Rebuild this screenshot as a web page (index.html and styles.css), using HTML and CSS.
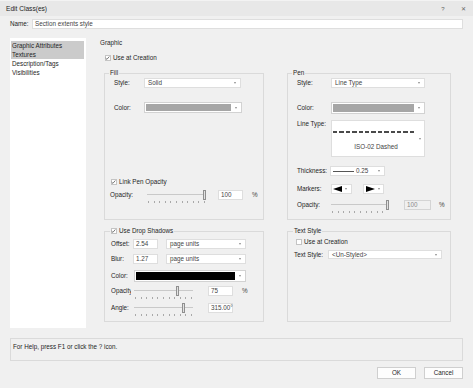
FILE: index.html
```html
<!DOCTYPE html>
<html lang="en">
<head>
    <meta charset="UTF-8">
    <title>Edit Class(es)</title>
    <link rel="stylesheet" href="styles.css">
</head>
<body>
<div class="dialog">
    <div class="titlebar">
        <span class="title">Edit Class(es)</span>
        <span class="tb-btn">?</span>
        <span class="tb-btn">&#x2715;</span>
    </div>

    <div class="content">
        <div class="name-row">
            <span class="name-label">Name:</span>
            <div class="field name-field">Section extents style</div>
        </div>

        <div class="main">
            <ul class="nav">
                <li class="sel">Graphic Attributes</li>
                <li class="sel">Textures</li>
                <li>Description/Tags</li>
                <li>Visibilities</li>
            </ul>

            <div class="panel">
                <div class="panel-title">Graphic</div>
                <div class="check top-check"><span class="cb on"><svg viewBox="0 0 6 6"><path d="M0.8 3.2 2.3 4.6 5.2 1.2"/></svg></span>Use at Creation</div>

                <div class="groups">
                    <!-- Fill -->
                    <div class="group">
                        <span class="legend">Fill</span>
                        <div class="row fill-style">
                            <span class="lbl" style="width:30px">Style:</span>
                            <div class="select" style="width:97px"><span>Solid</span><i class="arr"></i></div>
                        </div>
                        <div class="row fill-color">
                            <span class="lbl" style="width:30px">Color:</span>
                            <div class="swatch-box" style="width:98px"><span class="swatch gray"></span><i class="arr"></i></div>
                        </div>
                        <div class="check link-check"><span class="cb on"><svg viewBox="0 0 6 6"><path d="M0.8 3.2 2.3 4.6 5.2 1.2"/></svg></span>Link Pen Opacity</div>
                        <div class="row fill-opacity">
                            <span class="lbl" style="width:37px">Opacity:</span>
                            <div class="slider" style="width:59px"><span class="thumb" style="left:56px"></span></div>
                            <div class="field num" style="width:25px;margin-left:12px">100</div>
                            <span class="pct" style="margin-left:9px">%</span>
                        </div>
                    </div>

                    <!-- Pen -->
                    <div class="group">
                        <span class="legend">Pen</span>
                        <div class="row pen-style">
                            <span class="lbl" style="width:34px">Style:</span>
                            <div class="select" style="width:94px"><span>Line Type</span><i class="arr"></i></div>
                        </div>
                        <div class="row pen-color">
                            <span class="lbl" style="width:34px">Color:</span>
                            <div class="swatch-box" style="width:94px"><span class="swatch gray"></span><i class="arr"></i></div>
                        </div>
                        <div class="row pen-linetype">
                            <span class="lbl" style="width:34px">Line Type:</span>
                            <div class="linetype">
                                <div class="lt-main">
                                    <div class="dashes"></div>
                                    <div class="lt-name">ISO-02 Dashed</div>
                                </div>
                                <i class="arr"></i>
                            </div>
                        </div>
                        <div class="row pen-thick">
                            <span class="lbl" style="width:33px">Thickness:</span>
                            <div class="thick"><span class="thick-line"></span><span>0.25</span><i class="arr"></i></div>
                        </div>
                        <div class="row pen-markers">
                            <span class="lbl" style="width:34px">Markers:</span>
                            <div class="marker"><span class="tri-left"></span><i class="arr"></i></div>
                            <div class="marker" style="margin-left:11px"><span class="tri-right"></span><i class="arr"></i></div>
                        </div>
                        <div class="row pen-opacity">
                            <span class="lbl" style="width:34px">Opacity:</span>
                            <div class="slider" style="width:58px"><span class="thumb" style="left:55px"></span></div>
                            <div class="field num disabled" style="width:27px;margin-left:15px">100</div>
                            <span class="pct" style="margin-left:8px">%</span>
                        </div>
                    </div>

                    <!-- Drop shadows -->
                    <div class="group">
                        <span class="legend shadow-legend"><span class="cb on"><svg viewBox="0 0 6 6"><path d="M0.8 3.2 2.3 4.6 5.2 1.2"/></svg></span>Use Drop Shadows</span>
                        <div class="row sh-offset">
                            <span class="lbl" style="width:22px">Offset:</span>
                            <div class="field" style="width:25px">2.54</div>
                            <div class="select" style="width:80px;margin-left:8px"><span>page units</span><i class="arr"></i></div>
                        </div>
                        <div class="row sh-blur">
                            <span class="lbl" style="width:22px">Blur:</span>
                            <div class="field" style="width:25px">1.27</div>
                            <div class="select" style="width:80px;margin-left:8px"><span>page units</span><i class="arr"></i></div>
                        </div>
                        <div class="row sh-color">
                            <span class="lbl" style="width:23px">Color:</span>
                            <div class="swatch-box" style="width:112px"><span class="swatch black"></span><i class="arr"></i></div>
                        </div>
                        <div class="row sh-opacity">
                            <span class="lbl clip">Opacity:</span>
                            <div class="slider" style="width:59px"><span class="thumb" style="left:42px"></span></div>
                            <div class="field num" style="width:25px;margin-left:15px">75</div>
                            <span class="pct" style="margin-left:9px">%</span>
                        </div>
                        <div class="row sh-angle">
                            <span class="lbl" style="width:23px">Angle:</span>
                            <div class="slider" style="width:59px"><span class="thumb" style="left:48px"></span></div>
                            <div class="field num" style="width:25px;margin-left:15px">315.00&deg;</div>
                        </div>
                    </div>

                    <!-- Text style -->
                    <div class="group">
                        <span class="legend text-legend">Text Style</span>
                        <div class="check ts-check"><span class="cb"></span>Use at Creation</div>
                        <div class="row ts-style">
                            <span class="lbl" style="width:34px">Text Style:</span>
                            <div class="select" style="width:114px;height:9px"><span>&lt;Un-Styled&gt;</span><i class="arr"></i></div>
                        </div>
                    </div>
                </div>
            </div>
        </div>

        <div class="help">For Help, press F1 or click the ? icon.</div>

        <div class="buttons">
            <div class="btn">OK</div>
            <div class="btn">Cancel</div>
        </div>
    </div>
</div>
</body>
</html>
```
FILE: styles.css
```css
* {
    box-sizing: border-box;
}
body {
    margin: 0;
    background: #fff;
    font-family: "Liberation Sans", Arial, sans-serif;
    font-size: 6.3px;
    line-height: 8px;
    color: #1e1e1e;
}
.dialog {
    width: 473px;
    height: 388px;
    background: #f0f0f0;
}
.titlebar {
    height: 16px;
    background: #e8e8e8;
    border-top: 1px solid #f3f3f3;
    display: flex;
    align-items: center;
    padding-left: 6px;
    font-size: 6.6px;
}
.title {
    flex: 1;
}
.tb-btn {
    width: 20px;
    text-align: center;
    color: #666;
    font-size: 6px;
}
.content {
    padding: 0 10px;
}
.name-row {
    display: flex;
    align-items: center;
    height: 10px;
    margin-top: 3px;
}
.name-label {
    width: 22px;
}
.name-field {
    flex: 1;
    color: #555;
}
.field {
    height: 10px;
    background: #fff;
    border: 1px solid #dedede;
    padding: 0 2px;
    line-height: 8px;
    color: #444;
    white-space: nowrap;
}
.field.disabled {
    background: #f0f0f0;
    border-color: #d4d4d4;
    color: #8a8a8a;
}
.main {
    display: flex;
    height: 290px;
    margin-top: 9px;
}
.nav {
    list-style: none;
    margin: 0;
    width: 76px;
    background: #fff;
    padding: 3px 2px 0 1px;
}
.nav li {
    height: 9px;
    line-height: 9px;
    padding-left: 1px;
}
.nav li.sel {
    background: #cbcbcb;
}
.panel {
    margin-left: 14px;
    flex: 1;
}
.panel-title {
    margin-top: 1px;
}
.check {
    display: flex;
    align-items: center;
    height: 9px;
}
.top-check {
    margin-top: 6px;
    padding-left: 5px;
}
.cb {
    width: 6px;
    height: 6px;
    border: 1px solid #c4c4c4;
    background: #fff;
    margin-right: 2px;
    display: inline-flex;
}
.cb svg {
    width: 6px;
    height: 6px;
    margin: -1px 0 0 -1px;
    fill: none;
    stroke: #333;
    stroke-width: 0.8;
}
.groups {
    display: grid;
    grid-template-columns: 160px 164px;
    grid-template-rows: 147px 91px;
    column-gap: 23px;
    row-gap: 11px;
    margin: 11px 0 0 4px;
}
.group {
    position: relative;
    border: 1px solid #dadada;
}
.legend {
    position: absolute;
    top: -5px;
    left: 4px;
    padding: 0 1px;
    background: #f0f0f0;
    display: flex;
    align-items: center;
}
.shadow-legend {
    left: 5px;
}
.text-legend {
    left: 5px;
}
.row {
    display: flex;
    align-items: center;
    height: 10px;
}
.lbl {
    flex: none;
    white-space: nowrap;
}
.lbl.clip {
    width: 20px;
    margin-right: 3px;
    overflow: hidden;
}
.select {
    display: flex;
    align-items: center;
    justify-content: space-between;
    height: 10px;
    background: #fff;
    border: 1px solid #dedede;
    padding: 0 4px 0 3px;
    color: #444;
    white-space: nowrap;
}
.arr {
    flex: none;
    width: 0;
    height: 0;
    border-left: 1.5px solid transparent;
    border-right: 1.5px solid transparent;
    border-top: 2px solid #8a8a8a;
}
.swatch-box {
    display: flex;
    align-items: center;
    height: 100%;
    background: #fff;
    border: 1px solid #d2d2d2;
    padding: 1px 4px 1px 1px;
}
.swatch {
    flex: 1;
    height: 100%;
    margin-right: 4px;
}
.swatch.gray {
    background: #a6a6a6;
}
.swatch.black {
    background: #000;
}
.slider {
    position: relative;
    height: 10px;
    flex: none;
}
.slider::before {
    content: "";
    position: absolute;
    left: 0;
    right: 0;
    top: 4px;
    height: 1px;
    background: #c9c9c9;
}
.slider::after {
    content: "";
    position: absolute;
    left: 1px;
    right: 1px;
    top: 11px;
    height: 2px;
    background: repeating-linear-gradient(90deg, #a9a9a9 0 1px, transparent 1px 5.6px);
}
.thumb {
    position: absolute;
    top: 0;
    width: 3px;
    height: 10px;
    background: #e2e2e2;
    border: 1px solid #8f8f8f;
}
.pct {
    color: #444;
}

/* fill */
.fill-style {
    margin: 4px 0 0 9px;
}
.fill-color {
    margin: 14px 0 0 9px;
    height: 11px;
}
.link-check {
    margin: 64px 0 0 6px;
}
.fill-opacity {
    margin: 4px 0 0 5px;
}

/* pen */
.pen-style {
    margin: 4px 0 0 9px;
}
.pen-color {
    margin: 14px 0 0 9px;
    height: 12px;
}
.pen-linetype {
    margin: 6px 0 0 9px;
    height: 37px;
    align-items: flex-start;
}
.linetype {
    display: flex;
    align-items: center;
    width: 94px;
    height: 37px;
    background: #fff;
    border: 1px solid #dedede;
    padding-right: 3px;
}
.lt-main {
    flex: 1;
    align-self: flex-start;
    padding: 10px 0 0 1px;
}
.dashes {
    height: 2px;
    background: repeating-linear-gradient(90deg, #4a4a4a 0 4.4px, transparent 4.4px 6.4px);
    margin-right: 3px;
}
.lt-name {
    margin-top: 10px;
    text-align: center;
    color: #444;
}
.pen-thick {
    margin: 9px 0 0 9px;
}
.thick {
    display: flex;
    align-items: center;
    width: 55px;
    height: 10px;
    background: #fff;
    border: 1px solid #dedede;
    padding: 0 4px 0 2px;
    color: #444;
}
.thick-line {
    width: 21px;
    height: 1px;
    background: #555;
    margin-right: 2px;
}
.thick .arr {
    margin-left: auto;
}
.pen-markers {
    margin: 8px 0 0 9px;
}
.marker {
    display: flex;
    align-items: center;
    width: 21px;
    height: 10px;
    background: #fff;
    border: 1px solid #dedede;
    padding-left: 1px;
}
.marker .arr {
    margin-left: 3px;
}
.tri-left {
    width: 0;
    height: 0;
    border-top: 3.5px solid transparent;
    border-bottom: 3.5px solid transparent;
    border-right: 9px solid #000;
}
.tri-right {
    width: 0;
    height: 0;
    margin-left: 1px;
    border-top: 3.5px solid transparent;
    border-bottom: 3.5px solid transparent;
    border-left: 9px solid #000;
}
.pen-opacity {
    margin: 6px 0 0 9px;
}

/* drop shadows */
.sh-offset {
    margin: 7px 0 0 6px;
}
.sh-blur {
    margin: 5px 0 0 6px;
}
.sh-color {
    margin: 6px 0 0 6px;
    height: 12px;
}
.sh-opacity {
    margin: 4px 0 0 6px;
}
.sh-angle {
    margin: 7px 0 0 6px;
}

/* text style */
.ts-check {
    margin: 5px 0 0 8px;
}
.ts-style {
    margin: 4px 0 0 6px;
    height: 9px;
}

.help {
    margin-top: 10px;
    height: 23px;
    border: 1px solid #dadada;
    padding: 4px 2px;
}
.buttons {
    display: flex;
    justify-content: flex-end;
    gap: 8px;
    margin-top: 6px;
}
.btn {
    width: 39px;
    height: 12px;
    line-height: 10px;
    text-align: center;
    background: #fdfdfd;
    border: 1px solid #cfcfcf;
}
```
